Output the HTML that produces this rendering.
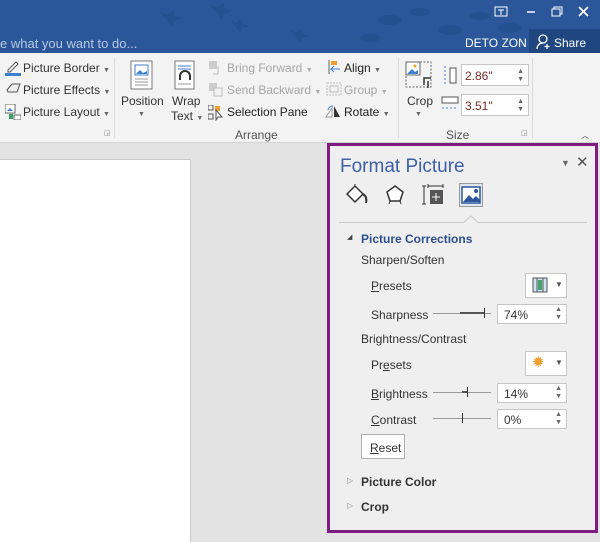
<!DOCTYPE html>
<html><head><meta charset="utf-8"><style>
*{margin:0;padding:0;box-sizing:border-box}
body{width:600px;height:542px;overflow:hidden;background:#e3e3e3;font-family:"Liberation Sans",sans-serif;font-size:12px;color:#333;position:relative}
.a{position:absolute;white-space:nowrap}
.hdr{left:0;top:0;width:600px;height:53px;background:#2b579a}
.rib{left:0;top:53px;width:600px;height:90px;background:#f3f3f3;border-bottom:1px solid #d4d4d4}
.sep{width:1px;background:#dadada;top:58px;height:80px}
.gray{color:#a6a6a6}
.dd{font-size:7px;color:#666}
.box{background:#fff;border:1px solid #c6c6c6}
.pane{left:327px;top:143px;width:271px;height:390px;border:3px solid #7f1c80;background:#efefef}
u{text-decoration:underline}
.spin{position:absolute;right:4px;top:1px;font-size:7px;line-height:8px;color:#666}
</style></head><body>
<div class="a hdr"></div>
<svg class="a" style="left:150px;top:0" width="400" height="52"><g fill="#24508f">
<path d="M10 12l8 3 5-6 2 7 8 2-9 3-2 6-5-7z"/><path d="M60 5l8 3 5-6 2 7 8 2-9 3-2 6-5-7z"/><path d="M80 20l7 3 4-5 2 6 7 2-8 2-2 5-4-6z"/><path d="M140 30l7 3 4-5 2 6 7 2-8 2-2 5-4-6z"/>
<ellipse cx="240" cy="20" rx="12" ry="5"/><ellipse cx="270" cy="12" rx="10" ry="4"/><ellipse cx="300" cy="30" rx="12" ry="5"/><ellipse cx="330" cy="16" rx="10" ry="4"/><ellipse cx="360" cy="28" rx="12" ry="5"/><ellipse cx="220" cy="38" rx="10" ry="4"/></g></svg>
<div class="a" style="left:0;top:36px;color:#b7c8e4;font-size:13px">e what you want to do...</div>
<div class="a" style="left:465px;top:36px;color:#fff;font-size:12px">DETO ZON</div>
<div class="a" style="left:529px;top:29px;width:71px;height:24px;background:#1f467f"></div>
<svg class="a" style="left:536px;top:34px" width="16" height="16"><circle cx="7" cy="5" r="4" fill="none" stroke="#fff" stroke-width="1.3"/><path d="M1 15c0-4 3-6 6-6M11 10v5M8.5 12.5h5" stroke="#fff" stroke-width="1.3" fill="none"/></svg>
<div class="a" style="left:554px;top:36px;color:#fff;font-size:12px">Share</div>
<svg class="a" style="left:493px;top:5px" width="107" height="14"><rect x="2" y="2" width="12" height="9" fill="none" stroke="#fff"/><path d="M5 5h6M8 5v5" stroke="#fff"/><path d="M34 7h8" stroke="#fff" stroke-width="1.5"/><rect x="59" y="4" width="8" height="7" fill="none" stroke="#fff"/><path d="M61 4V2h8v7h-2" fill="none" stroke="#fff"/><path d="M86 2l9 9M95 2l-9 9" stroke="#fff" stroke-width="1.8"/></svg>
<div class="a rib"></div>
<div class="a sep" style="left:114px"></div><div class="a sep" style="left:398px"></div><div class="a sep" style="left:532px"></div>
<svg class="a" style="left:5px;top:60px" width="16" height="16"><path d="M3 10l8-8 2 2-8 8H3z" fill="#fff" stroke="#555"/><rect x="0" y="13" width="16" height="3" fill="#3c7fcf"/></svg>
<div class="a" style="left:23px;top:61px">Picture Border <span class="dd">▼</span></div>
<svg class="a" style="left:5px;top:82px" width="16" height="14"><path d="M2 8l5-6h8l-3 8H3z" fill="#eee" stroke="#555"/></svg>
<div class="a" style="left:23px;top:83px">Picture Effects <span class="dd">▼</span></div>
<svg class="a" style="left:5px;top:104px" width="16" height="16"><rect x="0" y="0" width="10" height="9" fill="#fff" stroke="#666"/><path d="M2 7l3-3 3 3" fill="#3c7fcf"/><rect x="4" y="10" width="4" height="5" fill="#3a9e6a"/><rect x="9" y="11" width="7" height="5" fill="#fff" stroke="#666"/></svg>
<div class="a" style="left:23px;top:105px">Picture Layout <span class="dd">▼</span></div>
<div class="a" style="left:104px;top:129px;font-size:7px;color:#888">◲</div>
<svg class="a" style="left:130px;top:60px" width="24" height="30"><rect x="1" y="1" width="21" height="28" fill="#fff" stroke="#777"/><rect x="5" y="5" width="13" height="10" fill="#fff" stroke="#3c7fcf"/><path d="M6 14l4-4 3 3 4-2v3z" fill="#3c7fcf"/><path d="M5 19h13M5 22h13M5 25h13" stroke="#999"/></svg>
<div class="a" style="left:121px;top:94px">Position</div><div class="a dd" style="left:138px;top:111px">▼</div>
<svg class="a" style="left:174px;top:60px" width="22" height="30"><rect x="1" y="1" width="19" height="28" fill="#fff" stroke="#777"/><path d="M4 6h13M4 9h13" stroke="#3c7fcf"/><path d="M6 20v-4a5 5 0 0 1 10 0v4" fill="none" stroke="#333" stroke-width="2"/><path d="M4 24h13" stroke="#999"/></svg>
<div class="a" style="left:172px;top:94px">Wrap</div><div class="a" style="left:171px;top:109px">Text <span class="dd">▼</span></div>
<svg class="a" style="left:209px;top:61px" width="14" height="14"><rect x="0" y="0" width="8" height="8" fill="#ccc"/><path d="M9 5v8H4" fill="none" stroke="#bbb"/></svg>
<div class="a gray" style="left:227px;top:61px">Bring Forward <span class="dd" style="color:#aaa">▼</span></div>
<svg class="a" style="left:209px;top:83px" width="14" height="14"><rect x="0" y="0" width="8" height="8" fill="#ccc"/><rect x="5" y="5" width="8" height="8" fill="#f3f3f3" stroke="#bbb"/></svg>
<div class="a gray" style="left:227px;top:83px">Send Backward <span class="dd" style="color:#aaa">▼</span></div>
<svg class="a" style="left:208px;top:105px" width="16" height="16"><rect x="0" y="0" width="5" height="5" fill="none" stroke="#555"/><rect x="0" y="9" width="5" height="5" fill="none" stroke="#555"/><rect x="7" y="1" width="5" height="5" fill="#f0a030"/><path d="M8 5v10l2-3h4z" fill="#fff" stroke="#555"/></svg>
<div class="a" style="left:227px;top:105px;color:#222">Selection Pane</div>
<svg class="a" style="left:327px;top:60px" width="14" height="14"><path d="M2 0v14" stroke="#666"/><rect x="4" y="1" width="6" height="4" fill="#f0a030"/><path d="M13 9H4l3-3M4 9l3 3" fill="none" stroke="#3c7fcf"/></svg>
<div class="a" style="left:344px;top:61px;color:#222">Align <span class="dd">▼</span></div>
<svg class="a" style="left:326px;top:82px" width="16" height="14"><rect x="1" y="1" width="14" height="12" fill="none" stroke="#bbb" stroke-dasharray="2 1"/><rect x="4" y="4" width="8" height="6" fill="none" stroke="#bbb"/></svg>
<div class="a gray" style="left:344px;top:83px">Group <span class="dd" style="color:#aaa">▼</span></div>
<svg class="a" style="left:325px;top:104px" width="18" height="14"><path d="M9 2l6 11H9z" fill="#333"/><path d="M7 13H1l6-9z" fill="#fff" stroke="#999"/><path d="M3 6a5 5 0 0 1 5-4" stroke="#3c7fcf" fill="none"/></svg>
<div class="a" style="left:344px;top:105px;color:#222">Rotate <span class="dd">▼</span></div>
<div class="a" style="left:235px;top:128px;color:#555">Arrange</div>
<svg class="a" style="left:405px;top:61px" width="28" height="28"><rect x="1" y="1" width="25" height="25" fill="none" stroke="#666" stroke-dasharray="2 1.5"/><rect x="1" y="1" width="14" height="13" fill="#fff" stroke="#666"/><path d="M2 13l5-5 3 3 3-2v4z" fill="#3c7fcf"/><circle cx="10" cy="5" r="1.5" fill="#f0a030"/><path d="M19 24v-7h7M23 20v7" stroke="#333" stroke-width="1.5" fill="none"/></svg>
<div class="a" style="left:407px;top:94px">Crop</div><div class="a dd" style="left:415px;top:111px">▼</div>
<svg class="a" style="left:441px;top:65px" width="16" height="20"><path d="M4 1v18" stroke="#3c7fcf" stroke-dasharray="2 2"/><rect x="9" y="3" width="6" height="15" fill="#fff" stroke="#555"/></svg>
<svg class="a" style="left:441px;top:96px" width="18" height="16"><rect x="1" y="1" width="16" height="6" fill="#fff" stroke="#555"/><path d="M1 12h16" stroke="#3c7fcf" stroke-dasharray="2 2"/></svg>
<div class="a box" style="left:461px;top:64px;width:68px;height:22px"><span style="position:absolute;left:3px;top:4px;color:#7a2b2b">2.86"</span><span class="spin" style="top:3px">▲<br>▼</span></div>
<div class="a box" style="left:461px;top:94px;width:68px;height:22px"><span style="position:absolute;left:3px;top:4px;color:#7a2b2b">3.51"</span><span class="spin" style="top:3px">▲<br>▼</span></div>
<div class="a" style="left:446px;top:128px;color:#555">Size</div>
<div class="a" style="left:521px;top:129px;font-size:7px;color:#888">◲</div>
<div class="a" style="left:581px;top:130px;font-size:8px;color:#555">︿</div>
<div class="a" style="left:0;top:159px;width:191px;height:383px;background:#fff;border-right:1px solid #c8c8c8;border-top:1px solid #c8c8c8"></div>
<div class="a pane"></div>
<div class="a" style="left:340px;top:156px;font-size:19px;color:#3c5fa8">Format Picture</div>
<div class="a" style="left:561px;top:158px;font-size:9px;color:#666">▼</div>
<div class="a" style="left:576px;top:153px;font-size:15px;color:#555">✕</div>
<svg class="a" style="left:344px;top:184px" width="26" height="22"><path d="M3 10l8-8 8 8-8 8z" fill="#fff" stroke="#333" stroke-width="1.5"/><path d="M11 2V0" stroke="#333"/><path d="M19 10c3 2 4 5 3 9" stroke="#333" stroke-width="2" fill="none"/></svg>
<svg class="a" style="left:384px;top:184px" width="22" height="22"><path d="M11 2l8 6-3 9H6L3 8z" fill="#fff" stroke="#333" stroke-width="1.5"/><path d="M6 17l-1 3M16 17l1 3" stroke="#333"/></svg>
<svg class="a" style="left:422px;top:184px" width="22" height="22"><path d="M2 2v18M0 2h4M0 20h4M6 2h15M6 0v4M21 0v4" stroke="#333"/><rect x="8" y="6" width="13" height="14" fill="#555"/><path d="M14 9v8M10 13h8" stroke="#fff"/></svg>
<div class="a" style="left:459px;top:183px;width:24px;height:24px;border:1px solid #999;background:#dfe6f0"></div>
<svg class="a" style="left:461px;top:185px" width="20" height="20"><rect x="1" y="2" width="18" height="16" fill="#fff" stroke="#2b579a" stroke-width="1.5"/><path d="M2 17l6-7 4 4 3-3 4 4v2z" fill="#2b579a"/><circle cx="15" cy="6" r="2" fill="#2b579a"/></svg>
<div class="a" style="left:339px;top:222px;width:248px;height:1px;background:#c9c9c9"></div>
<svg class="a" style="left:463px;top:215px" width="16" height="9"><path d="M0 8l8-7 8 7" fill="#efefef" stroke="#c9c9c9"/></svg>
<div class="a" style="left:347px;top:233px;font-size:7px;color:#444">◢</div>
<div class="a" style="left:361px;top:232px;font-weight:bold;color:#2d4f8e">Picture Corrections</div>
<div class="a" style="left:361px;top:253px">Sharpen/Soften</div>
<div class="a" style="left:371px;top:279px"><u>P</u>resets</div>
<div class="a box" style="left:525px;top:273px;width:42px;height:25px"></div>
<svg class="a" style="left:532px;top:277px" width="16" height="16"><rect x="1" y="1" width="14" height="14" fill="#cfe3f3" stroke="#555"/><path d="M5 1v14M11 1v14" stroke="#555"/><rect x="6" y="3" width="4" height="10" fill="#4aa36a"/></svg>
<div class="a" style="left:555px;top:280px;font-size:8px;color:#555">▼</div>
<div class="a" style="left:371px;top:308px">Sharpness</div>
<div class="a" style="left:433px;top:313px;width:58px;height:1px;background:#999"></div>
<div class="a" style="left:460px;top:312px;width:25px;height:2px;background:#555"></div>
<div class="a" style="left:484px;top:308px;width:1px;height:10px;background:#333"></div>
<div class="a box" style="left:497px;top:304px;width:70px;height:20px"><span style="position:absolute;left:6px;top:3px">74%</span><span class="spin">▲<br>▼</span></div>
<div class="a" style="left:361px;top:332px">Brightness/Contrast</div>
<div class="a" style="left:371px;top:358px">Pr<u>e</u>sets</div>
<div class="a box" style="left:525px;top:351px;width:42px;height:25px"></div>
<div class="a" style="left:532px;top:353px;font-size:15px;color:#f0a030">✹</div>
<div class="a" style="left:555px;top:358px;font-size:8px;color:#555">▼</div>
<div class="a" style="left:371px;top:387px"><u>B</u>rightness</div>
<div class="a" style="left:433px;top:392px;width:58px;height:1px;background:#999"></div>
<div class="a" style="left:462px;top:391px;width:6px;height:2px;background:#555"></div>
<div class="a" style="left:467px;top:387px;width:1px;height:10px;background:#333"></div>
<div class="a box" style="left:497px;top:383px;width:70px;height:20px"><span style="position:absolute;left:6px;top:3px">14%</span><span class="spin">▲<br>▼</span></div>
<div class="a" style="left:371px;top:413px"><u>C</u>ontrast</div>
<div class="a" style="left:433px;top:418px;width:58px;height:1px;background:#999"></div>
<div class="a" style="left:462px;top:413px;width:1px;height:10px;background:#333"></div>
<div class="a box" style="left:497px;top:409px;width:70px;height:20px"><span style="position:absolute;left:6px;top:3px">0%</span><span class="spin">▲<br>▼</span></div>
<div class="a box" style="left:361px;top:434px;width:44px;height:25px;border-color:#adadad"><span style="position:absolute;left:8px;top:6px"><u>R</u>eset</span></div>
<div class="a" style="left:347px;top:476px;font-size:8px;color:#888">▷</div>
<div class="a" style="left:361px;top:475px;font-weight:bold;color:#333">Picture Color</div>
<div class="a" style="left:347px;top:501px;font-size:8px;color:#888">▷</div>
<div class="a" style="left:361px;top:500px;font-weight:bold;color:#333">Crop</div>
</body></html>
